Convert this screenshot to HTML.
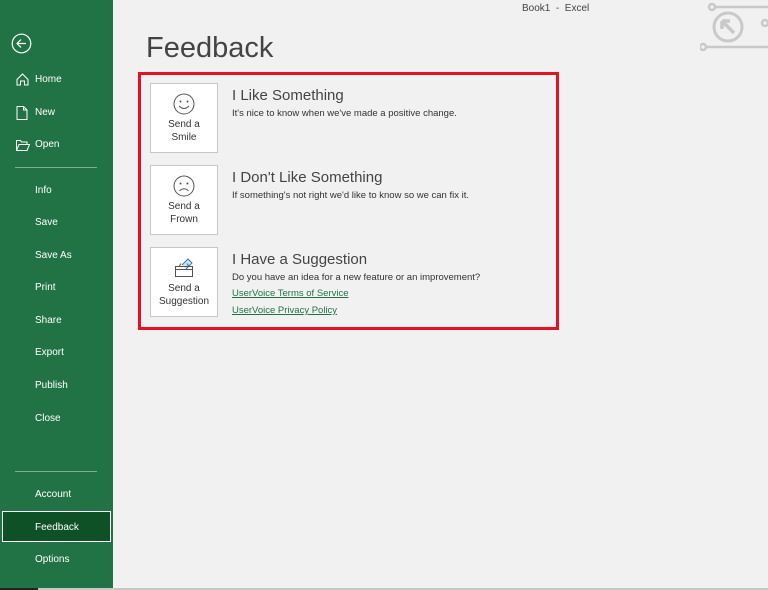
<!DOCTYPE html>
<html><head><meta charset="utf-8"><style>
*{margin:0;padding:0;box-sizing:border-box}
body{width:768px;height:590px;overflow:hidden;background:#f1f1f1;font-family:"Liberation Sans",sans-serif;position:relative}
.side{position:absolute;left:0;top:0;width:113px;height:588px;background:#217346;color:#fff}
.side .it{position:absolute;left:35px;font-size:10px;line-height:12px}
.side .ic{position:absolute;left:16px}
.hr{position:absolute;left:15px;width:82px;height:1px;background:#7fae92}
.fb{position:absolute;left:2px;top:511px;width:109px;height:31px;background:#0e5127;border:1px solid #fff}
.bottom{position:absolute;left:0;top:588px;width:768px;height:2px;background:#c8c8c8}
.bottom i{position:absolute;left:0;top:0;width:38px;height:2px;background:#222}
.title{position:absolute;left:146px;top:32px;font-size:29px;color:#444;font-weight:300}
.wt{position:absolute;left:522px;top:3px;font-size:10px;color:#444}
.red{position:absolute;left:138px;top:72px;width:421px;height:258px;border:3px solid #e81123}
.btn{position:absolute;left:150px;width:68px;height:70px;background:#fff;border:1px solid #c6c6c6;text-align:center;font-size:10px;color:#333;line-height:13px}
.btn svg{display:block;margin:9px auto 3px}
.h{position:absolute;left:232px;font-size:15px;color:#444}
.d{position:absolute;left:232px;font-size:9.5px;color:#333}
.l{position:absolute;left:232px;font-size:9.5px;color:#217346;text-decoration:underline}
</style></head><body>
<div class="side">
<svg class="ic" style="left:11px;top:33px" width="21" height="21" viewBox="0 0 21 21"><circle cx="10.5" cy="10.5" r="9.3" fill="none" stroke="#fff" stroke-width="1.2"/><path d="M15 10.5H6M10 6.5l-4 4 4 4" fill="none" stroke="#fff" stroke-width="1.2"/></svg>
<svg class="ic" style="top:73px" width="13" height="13" viewBox="0 0 13 13"><path d="M1 6.5L6.5 1 12 6.5V12H8.5V8h-4v4H1z" fill="none" stroke="#fff"/></svg>
<div class="it" style="top:74px">Home</div>
<svg class="ic" style="top:106px" width="12" height="14" viewBox="0 0 12 14"><path d="M1 .5h6.5L11 4v9.5H1zM7.5.5V4H11" fill="none" stroke="#fff"/></svg>
<div class="it" style="top:107px">New</div>
<svg class="ic" style="top:140px" width="14" height="11" viewBox="0 0 14 11"><path d="M.5 10.5V.5h4l1 1.5H11v2M.5 10.5l2.5-6h10.5l-2.5 6z" fill="none" stroke="#fff"/></svg>
<div class="it" style="top:139px">Open</div>
<div class="hr" style="top:167px"></div>
<div class="it" style="top:185px">Info</div>
<div class="it" style="top:217px">Save</div>
<div class="it" style="top:250px">Save As</div>
<div class="it" style="top:282px">Print</div>
<div class="it" style="top:315px">Share</div>
<div class="it" style="top:347px">Export</div>
<div class="it" style="top:380px">Publish</div>
<div class="it" style="top:413px">Close</div>
<div class="hr" style="top:471px"></div>
<div class="it" style="top:489px">Account</div>
<div class="fb"></div>
<div class="it" style="top:522px">Feedback</div>
<div class="it" style="top:554px">Options</div>
</div>
<div class="bottom"><i></i></div>
<div class="wt">Book1 &nbsp;-&nbsp; Excel</div>
<svg style="position:absolute;left:700px;top:0" width="68" height="55" viewBox="0 0 68 55"><g fill="none" stroke="#c9c9c9" stroke-width="2.5"><circle cx="12" cy="7" r="3"/><path d="M15 7H68"/><circle cx="65" cy="23" r="3"/><circle cx="3" cy="47" r="3"/><path d="M6 47H68"/><circle cx="28" cy="27" r="14" stroke-width="3"/><path d="M34 33L22 21M22 21v8M22 21h8" stroke-width="3.5"/></g></svg>
<div class="title">Feedback</div>
<div class="red"></div>
<div class="btn" style="top:83px"><svg width="22" height="22" viewBox="0 0 22 22"><circle cx="11" cy="11" r="10" fill="none" stroke="#555" stroke-width="1"/><circle cx="7.5" cy="8.5" r="1" fill="#555"/><circle cx="14.5" cy="8.5" r="1" fill="#555"/><path d="M6 13q5 5 10 0" fill="none" stroke="#555"/></svg>Send a<br>Smile</div>
<div class="btn" style="top:165px"><svg width="22" height="22" viewBox="0 0 22 22"><circle cx="11" cy="11" r="10" fill="none" stroke="#555" stroke-width="1"/><circle cx="7.5" cy="8.5" r="1" fill="#555"/><circle cx="14.5" cy="8.5" r="1" fill="#555"/><path d="M6.5 16q4.5-4.5 9 0" fill="none" stroke="#555"/></svg>Send a<br>Frown</div>
<div class="btn" style="top:247px"><svg width="22" height="22" viewBox="0 0 22 22"><path d="M9 8l6-6 4 4-6 6" fill="#cfe6f7" stroke="#2b7bc0"/><path d="M2.5 9.5h17v10h-17zM2.5 12.5h17M6 9.5l2-3M16 9.5l-2-3" fill="none" stroke="#555"/></svg>Send a<br>Suggestion</div>
<div class="h" style="top:87px">I Like Something</div>
<div class="d" style="top:108px">It's nice to know when we've made a positive change.</div>
<div class="h" style="top:169px">I Don't Like Something</div>
<div class="d" style="top:190px">If something's not right we'd like to know so we can fix it.</div>
<div class="h" style="top:251px">I Have a Suggestion</div>
<div class="d" style="top:272px">Do you have an idea for a new feature or an improvement?</div>
<div class="l" style="top:288px">UserVoice Terms of Service</div>
<div class="l" style="top:305px">UserVoice Privacy Policy</div>
</body></html>
